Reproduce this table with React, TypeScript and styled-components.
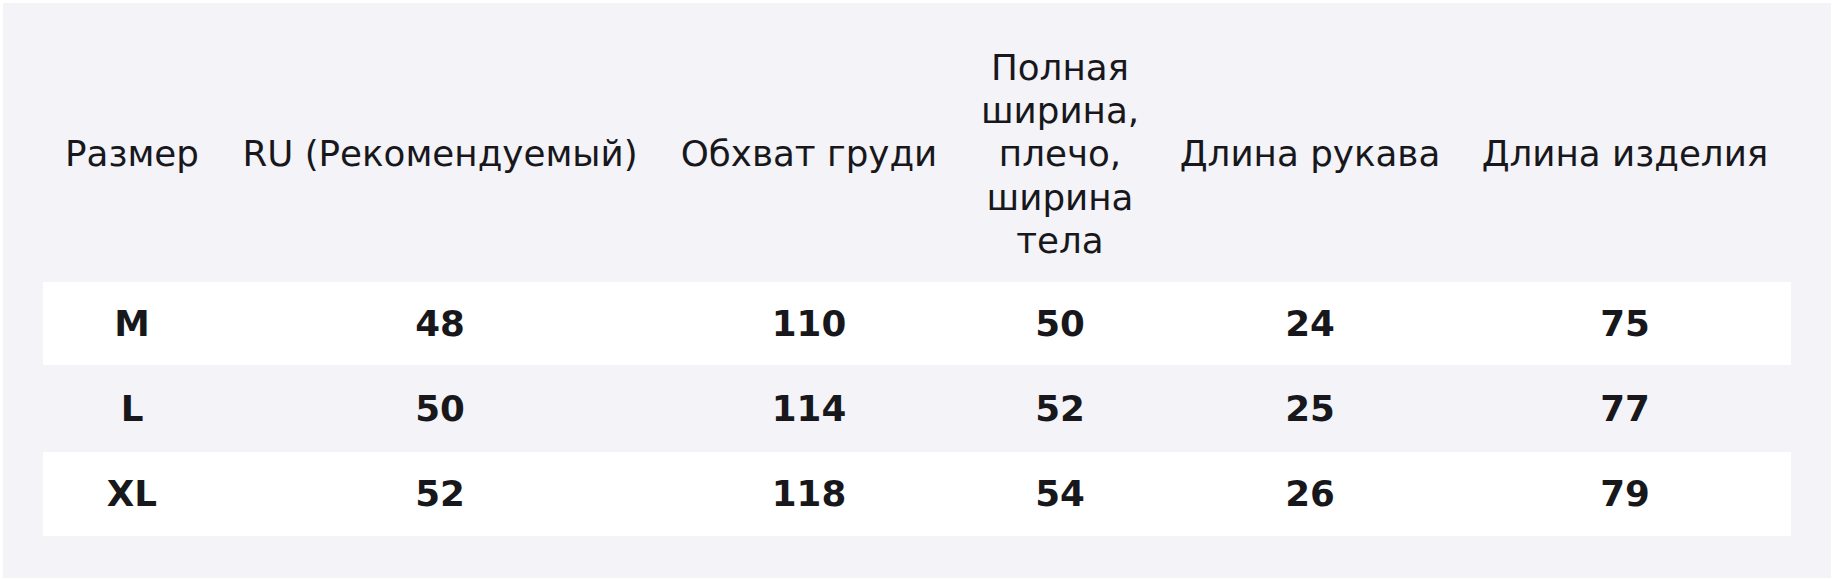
import React from "react";
import styled, { createGlobalStyle } from "styled-components";

const GlobalStyle = createGlobalStyle`
  html, body {
    margin: 0;
    padding: 0;
    background: #ffffff;
  }
  body {
    font-family: "DejaVu Sans", "Liberation Sans", sans-serif;
    color: #18181c;
  }
`;

const Page = styled.div`
  padding: 3px;
  background: #ffffff;
`;

const Panel = styled.section`
  background: #f3f3f8;
  padding: 23px 40px 42px 40px;
`;

const Table = styled.div`
  display: flex;
  flex-direction: column;
  width: 100%;
`;

const COLUMNS = "178px 438px 300px 202px 298px 332px";

const Row = styled.div<{ $white?: boolean; $pad?: number }>`
  display: grid;
  grid-template-columns: ${COLUMNS};
  align-items: center;
  background: ${(p) => (p.$white ? "#ffffff" : "transparent")};
  padding: ${(p) => p.$pad ?? 20}px 0;
`;

const HeadCell = styled.div`
  padding: 0 10px;
  text-align: center;
  font-size: 35.7px;
  line-height: 43.2px;
  font-weight: 400;
`;

const Cell = styled.div`
  padding: 0 10px;
  text-align: center;
  font-size: 35.7px;
  line-height: 43.2px;
  font-weight: 700;
`;

const headers = [
  "Размер",
  "RU (Рекомендуемый)",
  "Обхват груди",
  "Полная ширина, плечо, ширина тела",
  "Длина рукава",
  "Длина изделия",
];

const rows = [
  ["M", "48", "110", "50", "24", "75"],
  ["L", "50", "114", "52", "25", "77"],
  ["XL", "52", "118", "54", "26", "79"],
];

export default function App() {
  return (
    <>
      <GlobalStyle />
      <Page>
        <Panel>
          <Table>
            <Row>
              {headers.map((h) => (
                <HeadCell key={h}>{h}</HeadCell>
              ))}
            </Row>
            {rows.map((r, i) => (
              <Row key={r[0]} $white={i % 2 === 0} $pad={i === 1 ? 22 : 20}>
                {r.map((v, j) => (
                  <Cell key={j}>{v}</Cell>
                ))}
              </Row>
            ))}
          </Table>
        </Panel>
      </Page>
    </>
  );
}
